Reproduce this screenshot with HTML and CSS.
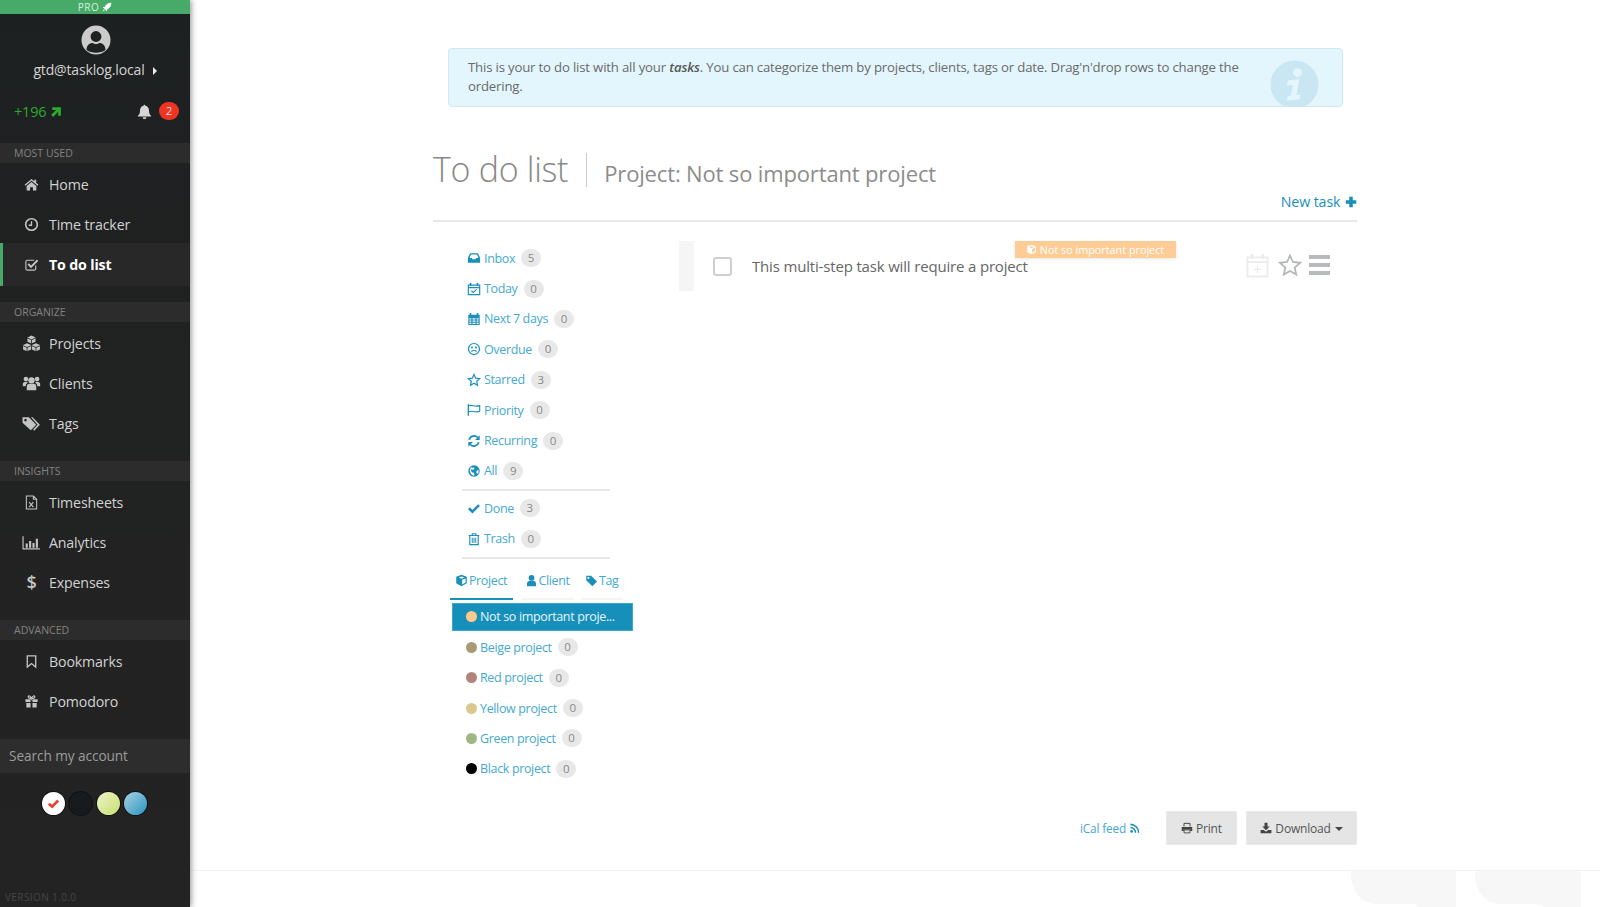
FILE: index.html
```html
<!DOCTYPE html>
<html lang="en">
<head>
<meta charset="utf-8">
<title>To do list</title>
<link rel="stylesheet" href="styles.css">
</head>
<body>
<svg class="defs" aria-hidden="true">
  <symbol id="i-home" viewBox="0 0 16 16"><path d="M8 2 .6 8.2l.9 1L8 3.9l6.5 5.3.9-1L13 6.200V3h-2v1.500z"/><path d="M8 5.400 2.800 9.600V14.500H6.500V11h3v3.500h3.700V9.600z"/></symbol>
  <symbol id="i-clock" viewBox="0 0 16 16"><circle cx="8" cy="8" r="6.200" fill="none" stroke="currentColor" stroke-width="1.700"/><path d="M8 4.500V8.800H5" fill="none" stroke="currentColor" stroke-width="1.400"/></symbol>
  <symbol id="i-check-square" viewBox="0 0 16 16"><path d="M12.500 9v3.500a1.500 1.500 0 0 1-1.500 1.500H3.500A1.500 1.500 0 0 1 2 12.500V5a1.500 1.500 0 0 1 1.500-1.500H11" fill="none" stroke="currentColor" stroke-width="1.200"/><path d="M4.500 7.500 7.500 10.500 14.500 3.500" fill="none" stroke="currentColor" stroke-width="2"/></symbol>
  <symbol id="i-cubes" viewBox="0 0 18 16"><path d="M9 .5 12.800 2.200V6.400L9 8.100 5.200 6.400V2.200z"/><path d="M4.800 7.800 8.600 9.500V13.700L4.800 15.400 1 13.700V9.500z"/><path d="M13.200 7.800 17 9.500V13.700L13.200 15.400 9.400 13.700V9.500z"/><path d="M5.200 2.800 9 4.500l3.800-1.700M1 10.100 4.800 11.800 8.600 10.100M9.400 10.100 13.200 11.800 17 10.100M9 4.500V8M4.800 11.800V15.400M13.200 11.800V15.400" fill="none" stroke="#1f2122" stroke-width=".8"/></symbol>
  <symbol id="i-users" viewBox="0 0 18 16"><circle cx="9" cy="5" r="3"/><circle cx="3.700" cy="3.800" r="2.200"/><circle cx="14.300" cy="3.800" r="2.200"/><path d="M4.500 14.500V10.500A2.500 2.500 0 0 1 7 8.300H11A2.500 2.500 0 0 1 13.500 10.500V14.500z"/><path d="M.8 10.500V8A1.800 1.800 0 0 1 2.600 6.500H5L5.500 7.200C4 8 3.500 9 3.500 10.500zM17.200 10.500V8A1.800 1.800 0 0 0 15.400 6.500H13L12.500 7.200C14 8 14.500 9 14.500 10.500z"/></symbol>
  <symbol id="i-tags" viewBox="0 0 18 16"><path d="M.5 2H6.500L13.500 9.300 8.300 14.500.5 7.200zM3.300 3.600a1.200 1.200 0 1 0 .01 0z" fill-rule="evenodd"/><path d="M8.500 2H10L17 9.300 11.500 14.800 10.500 13.800 14.800 9.300z"/></symbol>
  <symbol id="i-file-x" viewBox="0 0 16 16"><path d="M2.500 1H10L13.500 4.500V15H2.500z M10 1V4.500H13.500" fill="none" stroke="currentColor" stroke-width="1.100"/><path d="M5.500 7.500 10 13M10 7.500 5.500 13" fill="none" stroke="currentColor" stroke-width="1.200"/></symbol>
  <symbol id="i-chart" viewBox="0 0 18 16"><path d="M1 2V14H17" fill="none" stroke="currentColor" stroke-width="1.100"/><path d="M3.500 9H5.500V13H3.500zM6.700 6.500H8.700V13H6.700zM9.900 8.500H11.900V13H9.900zM13.100 4.500H15.100V13H13.100z"/></symbol>
  <symbol id="i-bookmark" viewBox="0 0 16 16"><path d="M3.500 2H12.500V14L8 10.200 3.500 14z" fill="none" stroke="currentColor" stroke-width="1.400"/></symbol>
  <symbol id="i-gift" viewBox="0 0 16 16"><path d="M1.500 5.500H7V8.500H1.500zM9 5.500H14.500V8.500H9zM2.500 9.500H7V14.500H2.500zM9 9.500H13.500V14.500H9z"/><path d="M8 5C6 5 4.500 4.500 4.500 3 4.500 1.500 7 1.500 8 5 9 1.500 11.500 1.500 11.500 3 11.500 4.500 10 5 8 5z" fill="none" stroke="currentColor" stroke-width="1.300"/></symbol>
  <symbol id="i-inbox" viewBox="0 0 16 16"><path d="M3.500 2.500H12.500L15 8V12.500A1 1 0 0 1 14 13.500H2A1 1 0 0 1 1 12.500V8zM4.500 4 3 8H5.500L6.500 9.500H9.500L10.500 8H13L11.500 4z" fill-rule="evenodd"/></symbol>
  <symbol id="i-cal-check" viewBox="0 0 16 16"><path d="M1.500 3.500H14.500V14.500H1.500zM1.500 6.500H14.500" fill="none" stroke="currentColor" stroke-width="1.300"/><path d="M4 1.200V4.500M12 1.200V4.500" stroke="currentColor" stroke-width="1.900"/><path d="M5 10 7.200 12 11 8.500" fill="none" stroke="currentColor" stroke-width="1.300"/></symbol>
  <symbol id="i-cal" viewBox="0 0 16 16"><path d="M1.500 3.200H14.500V14.800H1.500zM2.700 7V8.500H5V7zM6.300 7V8.500H9.700V7zM11 7V8.500H13.300V7zM2.700 9.700V11.200H5V9.700zM6.300 9.700V11.200H9.700V9.700zM11 9.700V11.200H13.300V9.700zM2.700 12.200V13.700H5V12.200zM6.300 12.200V13.700H9.700V12.200zM11 12.200V13.700H13.300V12.200z" fill-rule="evenodd"/><path d="M4 1.200V4.200M12 1.200V4.200" stroke="currentColor" stroke-width="1.800"/></symbol>
  <symbol id="i-frown" viewBox="0 0 16 16"><circle cx="8" cy="8" r="6.300" fill="none" stroke="currentColor" stroke-width="1.400"/><circle cx="5.700" cy="6.300" r="1.100"/><circle cx="10.300" cy="6.300" r="1.100"/><path d="M5 11C6.500 9.300 9.500 9.300 11 11" fill="none" stroke="currentColor" stroke-width="1.200"/></symbol>
  <symbol id="i-star" viewBox="0 0 16 16"><path d="M8 1.800 9.900 5.900 14.500 6.400 11.100 9.400 12 14 8 11.700 4 14 4.900 9.400 1.500 6.400 6.100 5.900z" fill="none" stroke="currentColor" stroke-width="1.400"/></symbol>
  <symbol id="i-flag" viewBox="0 0 16 16"><path d="M1.500 1.500V14.500" stroke="currentColor" stroke-width="1.500"/><path d="M2 3C6 1.500 8 5 14.500 3V9.500C9 11.500 6 8 2 10" fill="none" stroke="currentColor" stroke-width="1.300"/></symbol>
  <symbol id="i-refresh" viewBox="0 0 16 16"><path d="M2.500 6.500A5.800 5.800 0 0 1 12.300 4" fill="none" stroke="currentColor" stroke-width="2"/><path d="M14.500 1.500V6.800H9.200z"/><path d="M13.500 9.500A5.800 5.800 0 0 1 3.700 12" fill="none" stroke="currentColor" stroke-width="2"/><path d="M1.500 14.500V9.200H6.800z"/></symbol>
  <symbol id="i-globe" viewBox="0 0 16 16"><path d="M8 1.500a6.500 6.500 0 1 0 .01 0zM4.500 3.500 6.500 4.500 8 3.800 8.500 5.500 7 6.500 5 6 4.500 8 6.500 10 8 10 8.500 13 7 13.500 4.500 11 3 8zM11.500 7 13.500 7.500 13 10.500 11.500 11 10.500 9z" fill-rule="evenodd"/></symbol>
  <symbol id="i-check" viewBox="0 0 16 16"><path d="M2.200 8.300 6.200 12.200 13.800 4.600" fill="none" stroke="currentColor" stroke-width="2.900"/></symbol>
  <symbol id="i-trash" viewBox="0 0 16 16"><path d="M2 4H14M6 4V2H10V4" fill="none" stroke="currentColor" stroke-width="1.300"/><path d="M3.200 4.500V14.500H12.800V4.500" fill="none" stroke="currentColor" stroke-width="1.300"/><path d="M6 6.500V12.500M8 6.500V12.500M10 6.500V12.500" stroke="currentColor" stroke-width="1.100"/></symbol>
  <symbol id="i-cube" viewBox="0 0 16 16"><path d="M8 1 14.500 3.500V11.500L8 15 1.500 11.500V3.500zM8 3 4.500 4.400 8 5.800 11.500 4.400zM8.800 7.200V12.800L13 10.500V5.500z" fill-rule="evenodd"/></symbol>
  <symbol id="i-user" viewBox="0 0 16 16"><circle cx="8" cy="4.800" r="3.500"/><path d="M2.500 15V11A3 3 0 0 1 5.500 8.500H10.500A3 3 0 0 1 13.500 11V15z"/></symbol>
  <symbol id="i-tag" viewBox="0 0 16 16"><path d="M1.500 2H7.500L14.800 9.300 9 15 1.500 7.700zM4.200 3.600a1.200 1.200 0 1 0 .01 0z" fill-rule="evenodd"/></symbol>
  <symbol id="i-plus" viewBox="0 0 16 16"><path d="M6 2H10V6H14V10H10V14H6V10H2V6H6z"/></symbol>
  <symbol id="i-rss" viewBox="0 0 16 16"><circle cx="3.800" cy="12.200" r="2"/><path d="M2 6.500A7.500 7.500 0 0 1 9.500 14M2 2A12 12 0 0 1 14 14" fill="none" stroke="currentColor" stroke-width="2.200"/></symbol>
  <symbol id="i-print" viewBox="0 0 16 16"><path d="M4 6V1.800H12V6" fill="none" stroke="currentColor" stroke-width="1.300"/><path d="M1 6.500H15V12H12.500V10H3.500V12H1z"/><path d="M4 10.500H12V14.500H4z" fill="none" stroke="currentColor" stroke-width="1.200"/></symbol>
  <symbol id="i-download" viewBox="0 0 16 16"><path d="M6 1H10V6H13L8 11 3 6H6z"/><path d="M.8 10.500H5L8 13 11 10.500H15.200V15H.8z"/></symbol>
  <symbol id="i-rocket" viewBox="0 0 16 16"><path d="M15 1C10 1 6.500 3.500 4.500 7.500L1 8.500 3 10 6 13 7.500 15 8.500 11.500C12.500 9.500 15 6 15 1z"/><path d="M3 11.500 1 15 4.500 13z"/></symbol>
  <symbol id="i-arrow" viewBox="0 0 16 16"><path d="M3 1.500H14.500V13H10.800V7.800L4.300 14.500 1.500 11.700 8.200 5.200H3z"/></symbol>
  <symbol id="i-bell" viewBox="0 0 16 16"><path d="M8 .8C8.600.8 9 1.200 9 1.800 11.500 2.300 12.800 4.300 12.800 7 12.800 10 13.500 11.300 15 12.500V13.200H1V12.500C2.500 11.300 3.200 10 3.200 7 3.200 4.300 4.500 2.300 7 1.800 7 1.200 7.400.8 8 .8z"/><path d="M6 14H10A2 2 0 0 1 6 14z"/></symbol>
</svg>

<aside class="sidebar">
  <div class="pro">PRO <svg class="ico-pro"><use href="#i-rocket"/></svg></div>
  <div class="profile">
    <svg class="avatar" viewBox="0 0 30 30"><circle cx="15" cy="15" r="14.500" fill="#cbcbcb"/><circle cx="15" cy="11.500" r="5.400" fill="#1e2122"/><path d="M5.500 25C5.500 20.500 8.500 18 11.500 18 13.500 19.500 16.500 19.500 18.500 18 21.500 18 24.500 20.500 24.500 25 19.500 28.500 10.500 28.500 5.500 25z" fill="#1e2122"/></svg>
    <div class="email">gtd@tasklog.local<span class="caret-right"></span></div>
  </div>
  <div class="score-row">
    <span class="score">+196 <svg class="ico-arrow"><use href="#i-arrow"/></svg></span>
    <span class="alerts"><svg class="ico-bell"><use href="#i-bell"/></svg><span class="count">2</span></span>
  </div>

  <h2 class="nav-head">Most used</h2>
  <ul class="nav">
    <li class="nav-item"><svg class="nav-ico"><use href="#i-home"/></svg>Home</li>
    <li class="nav-item"><svg class="nav-ico"><use href="#i-clock"/></svg>Time tracker</li>
    <li class="nav-item active"><svg class="nav-ico"><use href="#i-check-square"/></svg>To do list</li>
  </ul>
  <h2 class="nav-head">Organize</h2>
  <ul class="nav">
    <li class="nav-item"><svg class="nav-ico wide"><use href="#i-cubes"/></svg>Projects</li>
    <li class="nav-item"><svg class="nav-ico wide"><use href="#i-users"/></svg>Clients</li>
    <li class="nav-item"><svg class="nav-ico wide"><use href="#i-tags"/></svg>Tags</li>
  </ul>
  <h2 class="nav-head">Insights</h2>
  <ul class="nav">
    <li class="nav-item"><svg class="nav-ico"><use href="#i-file-x"/></svg>Timesheets</li>
    <li class="nav-item"><svg class="nav-ico wide"><use href="#i-chart"/></svg>Analytics</li>
    <li class="nav-item"><span class="nav-ico dollar">$</span>Expenses</li>
  </ul>
  <h2 class="nav-head">Advanced</h2>
  <ul class="nav last">
    <li class="nav-item"><svg class="nav-ico"><use href="#i-bookmark"/></svg>Bookmarks</li>
    <li class="nav-item"><svg class="nav-ico"><use href="#i-gift"/></svg>Pomodoro</li>
  </ul>
  <div class="search">Search my account</div>
  <div class="swatches">
    <span class="swatch s-white"><svg viewBox="0 0 16 16"><path d="M3 8.200 6.500 11.300 13 4.800" fill="none" stroke="#ee4030" stroke-width="2.800"/></svg></span>
    <span class="swatch s-dark"></span>
    <span class="swatch s-lime"></span>
    <span class="swatch s-blue"></span>
  </div>
  <div class="version">VERSION 1.0.0</div>
</aside>

<div class="page">
  <main class="content">
    <div class="notice">
      <p>This is your to do list with all your <em>tasks</em>. You can categorize them by projects, clients, tags or date. Drag'n'drop rows to change the ordering.</p>
      <svg class="notice-ico" viewBox="0 0 50 50"><circle cx="25" cy="25" r="24.500" fill="#c9e6f2"/><circle cx="28" cy="13" r="4.500" fill="#e3f6fd"/><path d="M18 21 30 19.500 27 36 31 35.500 30 40 17 41.500 18 37 21 36.500 23.500 25.500 17.500 26z" fill="#e3f6fd"/></svg>
    </div>

    <header class="page-head">
      <div class="titles">
        <h1 class="title">To do list</h1>
        <span class="subtitle">Project: Not so important project</span>
      </div>
      <a class="new-task">New task <svg class="ico-plus"><use href="#i-plus"/></svg></a>
    </header>

    <div class="work">
      <nav class="filters">
        <ul class="flist">
          <li class="fitem"><svg class="fico"><use href="#i-inbox"/></svg><a>Inbox</a><span class="badge">5</span></li>
          <li class="fitem"><svg class="fico"><use href="#i-cal-check"/></svg><a>Today</a><span class="badge">0</span></li>
          <li class="fitem"><svg class="fico"><use href="#i-cal"/></svg><a>Next 7 days</a><span class="badge">0</span></li>
          <li class="fitem"><svg class="fico"><use href="#i-frown"/></svg><a>Overdue</a><span class="badge">0</span></li>
          <li class="fitem"><svg class="fico"><use href="#i-star"/></svg><a>Starred</a><span class="badge">3</span></li>
          <li class="fitem"><svg class="fico"><use href="#i-flag"/></svg><a>Priority</a><span class="badge">0</span></li>
          <li class="fitem"><svg class="fico"><use href="#i-refresh"/></svg><a>Recurring</a><span class="badge">0</span></li>
          <li class="fitem"><svg class="fico"><use href="#i-globe"/></svg><a>All</a><span class="badge">9</span></li>
        </ul>
        <ul class="flist ruled">
          <li class="fitem"><svg class="fico"><use href="#i-check"/></svg><a>Done</a><span class="badge">3</span></li>
          <li class="fitem"><svg class="fico"><use href="#i-trash"/></svg><a>Trash</a><span class="badge">0</span></li>
        </ul>
        <div class="tabs">
          <a class="tab tab-project on"><svg class="tab-ico"><use href="#i-cube"/></svg> Project</a>
          <a class="tab tab-client"><svg class="tab-ico"><use href="#i-user"/></svg> Client</a>
          <a class="tab tab-tag"><svg class="tab-ico"><use href="#i-tag"/></svg> Tag</a>
        </div>
        <ul class="plist">
          <li class="pitem selected"><span class="dot d-orange"></span><a>Not so important proje...</a></li>
          <li class="pitem"><span class="dot d-beige"></span><a>Beige project</a><span class="badge">0</span></li>
          <li class="pitem"><span class="dot d-red"></span><a>Red project</a><span class="badge">0</span></li>
          <li class="pitem"><span class="dot d-yellow"></span><a>Yellow project</a><span class="badge">0</span></li>
          <li class="pitem"><span class="dot d-green"></span><a>Green project</a><span class="badge">0</span></li>
          <li class="pitem"><span class="dot d-black"></span><a>Black project</a><span class="badge">0</span></li>
        </ul>
      </nav>

      <section class="tasks">
        <div class="task">
          <span class="handle"></span>
          <span class="checkbox"></span>
          <span class="task-text">This multi-step task will require a project</span>
          <span class="task-tag"><svg class="tag-ico"><use href="#i-cube"/></svg> Not so important project</span>
          <span class="task-actions">
            <svg class="act-cal" viewBox="0 0 24 26"><path d="M1.500 4.500H22.500V24.500H1.500zM1.500 9.500H22.500" fill="none" stroke="#ececec" stroke-width="2"/><path d="M6.500 1V6M17.500 1V6" stroke="#ececec" stroke-width="3"/><path d="M12 13V21M8 17H16" stroke="#ececec" stroke-width="1.400"/></svg>
            <svg class="act-star" viewBox="0 0 24 24"><path d="M12 2.500 14.900 9 22 9.800 16.700 14.500 18.200 21.500 12 18 5.800 21.500 7.300 14.500 2 9.800 9.100 9z" fill="none" stroke="#b5b8b8" stroke-width="1.800"/></svg>
            <span class="act-menu"><i></i><i></i><i></i></span>
          </span>
        </div>
      </section>
    </div>

    <div class="tools">
      <a class="ical">iCal feed <svg class="ico-rss"><use href="#i-rss"/></svg></a>
      <button class="btn btn-print"><svg class="btn-ico"><use href="#i-print"/></svg> Print</button>
      <button class="btn btn-download"><svg class="btn-ico"><use href="#i-download"/></svg> Download <span class="caret-down"></span></button>
    </div>
  </main>
  <footer class="foot">
    <svg class="foot-art" viewBox="0 0 230 37"><path d="M0 0C0 20 9 33 26 33H59C64 33 67 34 69 37H105V0zM124 0C124 20 133 33 150 33H183C188 33 191 34 193 37H230V0z" fill="#f7f7f7"/></svg>
  </footer>
</div>
</body>
</html>
```

FILE: styles.css
```css
* { box-sizing: border-box; }
html, body { margin: 0; padding: 0; height: 907px; overflow: hidden; }
body { display: flex; font-family: "Open Sans", sans-serif; background: #fff; color: #666; font-size: 12.500px; letter-spacing: -.35px; }
ul { list-style: none; margin: 0; padding: 0; }
.defs { display: none; }
svg { fill: currentColor; }

.sidebar { width: 190px; flex: none; height: 907px; background: linear-gradient(#1d2021, #212222 45%, #242323); color: #ddd; box-shadow: 1px 0 6px rgba(0,0,0,.45); display: flex; flex-direction: column; position: relative; z-index: 2; letter-spacing: 0; }
.pro { height: 14px; background: #47aa68; color: #d8efdf; font-size: 10px; line-height: 14px; text-align: center; letter-spacing: .5px; }
.ico-pro { width: 10px; height: 10px; color: #fff; vertical-align: -1px; }
.profile { display: flex; flex-direction: column; align-items: center; padding-top: 11px; }
.avatar { width: 30px; height: 30px; margin-left: 2px; }
.email { font-size: 14px; line-height: 20px; margin-top: 5px; color: #d4d4d4; letter-spacing: -.15px; }
.caret-right { display: inline-block; border-left: 4px solid #eee; border-top: 4px solid transparent; border-bottom: 4px solid transparent; margin-left: 8px; }
.score-row { display: flex; justify-content: space-between; align-items: center; padding: 0 11px 0 14px; height: 22px; margin-top: 20px; margin-bottom: 21px; }
.score { color: #2bab2c; font-size: 14.500px; letter-spacing: -.2px; }
.ico-arrow { width: 12px; height: 12px; color: #2bab2c; vertical-align: -1px; }
.alerts { display: flex; align-items: center; gap: 7px; }
.ico-bell { width: 15px; height: 15px; color: #d5d5d5; }
.count { width: 20px; height: 18px; border-radius: 9px; background: #ee3524; color: #f5d8d4; font-size: 11.500px; line-height: 18px; text-align: center; }
.nav-head { margin: 0; height: 20px; background: #2c2c2c; color: #838383; font-size: 10.500px; font-weight: 400; line-height: 20px; text-transform: uppercase; padding-left: 14px; }
.nav { padding: 1px 0 18px; }
.nav-item { display: flex; align-items: center; height: 40px; font-size: 14.200px; color: #d2d2d2; padding-left: 49px; position: relative; letter-spacing: -.15px; }
.nav-item.active { height: 43px; margin: -1px 0 -2px; background: #282828; border-left: 3px solid #47aa68; padding-left: 46px; color: #fff; font-weight: 700; }
.nav-ico { width: 15px; height: 15px; position: absolute; left: 24px; top: 50%; margin-top: -7.500px; color: #c4c4c4; }
.active .nav-ico { left: 21px; }
.nav-ico.wide { width: 19px; height: 17px; margin-top: -8.500px; left: 21.500px; }
.dollar { font-size: 18px; line-height: 15px; text-align: center; font-weight: 600; }
.search { height: 34px; background: #2d2d2d; color: #9c9c9c; font-size: 13.700px; line-height: 34px; padding-left: 9px; letter-spacing: -.1px; }
.swatches { display: flex; justify-content: center; gap: 4.500px; margin-top: 19px; padding-right: 1px; }
.swatch { width: 23px; height: 23px; border-radius: 50%; display: block; box-shadow: 0 0 0 1px #111; }
.swatch svg { display: block; width: 15px; height: 15px; margin: 4px; }
.s-white { background: #fff; }
.s-dark { background: #171b1e; }
.s-lime { background: linear-gradient(135deg, #eef3c9, #c7e06d); }
.s-blue { background: linear-gradient(135deg, #a9d3e2, #2a93c0); }
.version { margin-top: auto; color: #454545; font-size: 10px; line-height: 12px; padding: 0 0 4px 5px; letter-spacing: .4px; }

.page { flex: 1; min-width: 0; height: 907px; display: flex; flex-direction: column; }
.content { width: 924px; margin-left: 243px; flex: 1; display: flex; flex-direction: column; }
.notice { position: relative; overflow: hidden; margin: 48px 14px 0 15px; height: 59px; background: #e3f6fd; border: 1px solid #cfe8f2; border-radius: 4px; padding: 9px 90px 0 19px; }
.notice p { margin: 0; font-size: 13.200px; line-height: 19px; color: #6a6a6a; letter-spacing: -.18px; }
.notice em { font-style: italic; font-weight: 600; color: #555; }
.notice-ico { position: absolute; right: 23px; top: 11px; width: 49px; height: 49px; }

.page-head { position: relative; height: 115px; border-bottom: 2px solid #e8e8e8; }
.titles { display: flex; align-items: center; padding-top: 44px; }
.title { margin: 0; font-size: 34px; font-weight: 300; color: #888; line-height: 48px; letter-spacing: -.3px; padding: 0 18px 2px 0; border-right: 1px solid #ccc; height: 34px; display: flex; align-items: center; }
.subtitle { font-size: 22px; color: #8c8c8c; margin-left: 17px; margin-top: 6px; letter-spacing: -.15px; line-height: 32px; }
.new-task { position: absolute; right: -1px; top: 85px; color: #1a8fba; font-size: 14.200px; line-height: 20px; letter-spacing: -.1px; }
.ico-plus { width: 14px; height: 14px; vertical-align: -2px; }

.work { display: flex; height: 591px; }
.filters { width: 246px; flex: none; padding-top: 21px; }
.flist { margin-left: 29px; width: 148px; border-bottom: 2px solid #e8e8e8; padding-bottom: 3px; }
.flist.ruled { padding-top: 2px; padding-bottom: 3px; }
.fitem { display: flex; align-items: center; height: 30.400px; }
.fico { width: 14px; height: 14px; color: #1a8fba; margin: 0 3px 0 5px; flex: none; }
.fitem a, .pitem a, .tab, .ical { color: #45a9cf; }
.badge { min-width: 20px; height: 18px; border-radius: 9px; background: #e8e8e8; color: #888; font-size: 11.500px; line-height: 18px; text-align: center; margin-left: 6px; letter-spacing: 0; }
.tabs { display: flex; margin: 7px 0 0 17px; gap: 8px; height: 41px; }
.tab { display: block; height: 34px; padding: 5px 0 0 5px; line-height: 20px; border-bottom: 2px solid #f5f5f5; white-space: nowrap; }
.tab-project { width: 63px; }
.tab-client { width: 52px; padding-left: 3.500px; }
.tab-tag { width: 42px; padding-left: 4px; }
.tab.on { border-bottom-color: #1a8fba; }
.tab-ico { width: 13px; height: 13px; color: #1a8fba; vertical-align: -2px; margin-right: -2px; }
.plist { margin: -5px 0 0 19px; width: 181px; }
.pitem { display: flex; align-items: center; height: 30.400px; padding-left: 14px; }
.pitem.selected { height: 28px; margin-bottom: 1.200px; margin-top: 1px; background: #1690bb; box-shadow: 0 0 0 1px #3ea6cd inset; }
.selected a { color: #e6f4f9; }
.dot { width: 11px; height: 11px; border-radius: 50%; margin-right: 3px; flex: none; }
.d-orange { background: #ffc98a; }
.d-beige { background: #a89a72; }
.d-red { background: #b0847a; }
.d-yellow { background: #dcc78e; }
.d-green { background: #9db884; }
.d-black { background: #000; }

.tasks { flex: 1; padding-top: 19px; }
.task { position: relative; display: flex; align-items: center; height: 50px; }
.handle { width: 15px; height: 50px; background: #f5f5f5; flex: none; }
.checkbox { width: 19px; height: 19px; border: 2px solid #cfcfcf; border-radius: 3px; margin-left: 19px; flex: none; }
.task-text { font-size: 15px; color: #666; margin: 0 0 1px 20px; letter-spacing: -.17px; }
.task-tag { position: absolute; left: 336px; top: 0; width: 161px; height: 17px; background: #ffcc95; color: #fff; font-size: 10.800px; line-height: 17px; padding-left: 11px; box-shadow: 0 1px 3px rgba(0,0,0,.1); white-space: nowrap; letter-spacing: 0; }
.tag-ico { width: 11px; height: 11px; vertical-align: -1px; }
.task-actions { margin-left: auto; display: flex; align-items: center; gap: 9px; padding-right: 27px; margin-top: -2px; }
.act-cal { width: 23px; height: 25px; }
.act-star { width: 24px; height: 24px; margin-right: -2px; }
.act-menu { display: flex; flex-direction: column; gap: 4px; width: 21px; }
.act-menu i { display: block; height: 4px; background: #b7baba; }

.tools { display: flex; align-items: center; justify-content: flex-end; height: 34px; margin-top: -2px; }
.ical { font-size: 11.800px; margin-right: 26px; letter-spacing: -.15px; }
.ico-rss { width: 11px; height: 11px; color: #1a8fba; vertical-align: -1px; }
.btn { height: 34px; background: #e5e5e5; border: 1px solid #eaeaea; border-radius: 1px; color: #555; font: 400 12px "Open Sans", sans-serif; letter-spacing: -.2px; padding: 0; }
.btn-print { width: 71px; }
.btn-download { width: 111px; margin-left: 9px; }
.btn-ico { width: 12px; height: 12px; color: #444; vertical-align: -1px; }
.caret-down { display: inline-block; border-top: 4px solid #444; border-left: 4px solid transparent; border-right: 4px solid transparent; vertical-align: 2px; margin-left: 1px; }

.foot { flex: none; height: 37px; border-top: 1px solid #f3f3f3; display: flex; justify-content: flex-end; padding-right: 19px; }
.foot-art { width: 230px; height: 37px; flex: none; display: block; }
```
